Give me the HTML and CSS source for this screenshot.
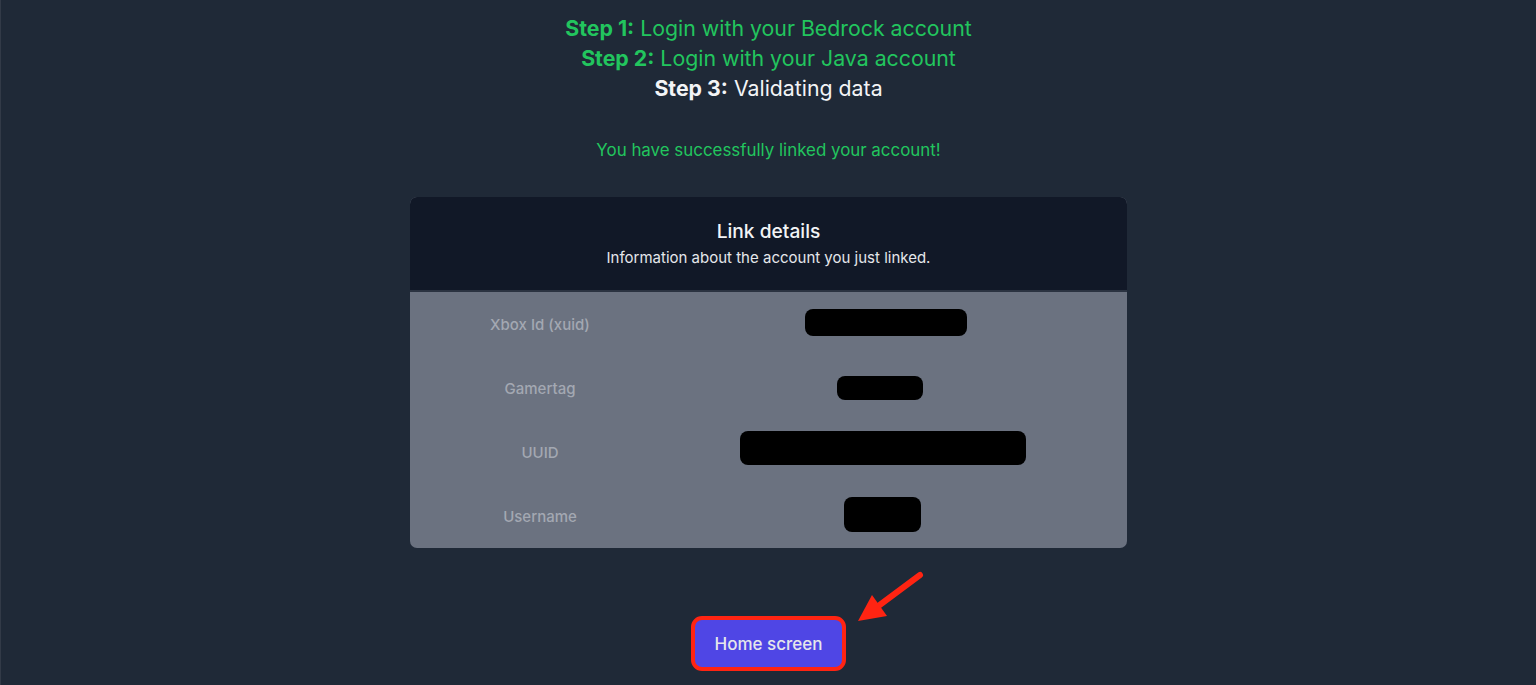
FILE: index.html
```html
<!DOCTYPE html>
<html lang="en">
<head>
<meta charset="utf-8">
<title>Link details</title>
<link rel="stylesheet" href="styles.css">
</head>
<body>
<main class="page">
  <div class="steps">
    <p class="step done"><strong>Step 1:</strong> Login with your Bedrock account</p>
    <p class="step done"><strong>Step 2:</strong> Login with your Java account</p>
    <p class="step current"><strong>Step 3:</strong> Validating data</p>
  </div>
  <p class="success">You have successfully linked your account!</p>
  <section class="card">
    <header class="card-head">
      <h2 class="card-title">Link details</h2>
      <p class="card-sub">Information about the account you just linked.</p>
    </header>
    <div class="rows">
      <div class="row"><span class="label">Xbox Id (xuid)</span><span class="value"><span class="redact r1"></span></span></div>
      <div class="row"><span class="label">Gamertag</span><span class="value"><span class="redact r2"></span></span></div>
      <div class="row"><span class="label">UUID</span><span class="value"><span class="redact r3"></span></span></div>
      <div class="row"><span class="label">Username</span><span class="value"><span class="redact r4"></span></span></div>
    </div>
  </section>
  <div class="actions">
    <button class="home-btn" type="button">Home screen</button>
    <svg class="arrow" width="90" height="70" viewBox="0 0 90 70" aria-hidden="true">
      <line x1="79" y1="9" x2="36" y2="41" stroke="#ff2412" stroke-width="6" stroke-linecap="round"/>
      <polygon points="17,55 31,29 46,50" fill="#ff2412"/>
    </svg>
  </div>
</main>
</body>
</html>
```

FILE: styles.css
```css
* { box-sizing: border-box; }
html, body { margin: 0; padding: 0; }
body {
  background: #1f2937;
  font-family: Inter, "Noto Sans", "Liberation Sans", sans-serif;
  color: #f3f4f6;
  height: 685px;
  overflow: hidden;
  border-left: 1px solid #323a47;
}
.page {
  display: flex;
  flex-direction: column;
  align-items: center;
  padding-top: 13px;
}
.steps { text-align: center; }
.step {
  margin: 0;
  font-size: 21.3px;
  line-height: 30px;
}
.step strong { font-weight: 700; }
.step.done { color: #22c55e; }
.step.current { color: #f3f4f6; }
.success {
  margin: 35px 0 0;
  font-size: 16.9px;
  line-height: 24px;
  color: #22c55e;
}
.card {
  margin-top: 35px;
  width: 717px;
  border-radius: 7px;
  overflow: hidden;
  background: #6b7280;
}
.card-head {
  background: #111827;
  text-align: center;
  padding: 20px 0 22px;
  border-bottom: 2px solid #2b3341;
}
.card-title {
  margin: 0;
  font-size: 19.2px;
  line-height: 28px;
  font-weight: 500;
  color: #f3f4f6;
}
.card-sub {
  margin: 3px 0 0;
  font-size: 15px;
  line-height: 20px;
  color: #e5e7eb;
}
.rows { display: flex; flex-direction: column; }
.row {
  display: grid;
  grid-template-columns: 260px 1fr;
  height: 64px;
  align-items: center;
}
.label {
  text-align: center;
  font-size: 15px;
  font-weight: 500;
  color: #a3a8b2;
}
.value {
  display: flex;
  justify-content: center;
  padding-right: 32px;
}
.redact {
  display: block;
  background: #000;
  border-radius: 8px;
}
.r1 { width: 162px; height: 27px; margin-left: 6px; margin-top: -3px; }
.r2 { width: 86px; height: 24px; margin-left: -6px; }
.r3 { width: 286px; height: 34px; margin-top: -8px; }
.r4 { width: 77px; height: 35px; margin-top: -3px; }
.actions {
  position: relative;
  margin-top: 68px;
}
.home-btn {
  display: block;
  width: 155px;
  height: 55px;
  background: #4f46e5;
  color: #e5e7eb;
  font-family: inherit;
  font-size: 17px;
  font-weight: 500;
  border: 4px solid #ff2412;
  border-radius: 11px;
  padding: 0;
}
.arrow {
  position: absolute;
  left: 150px;
  top: -50px;
}
```
